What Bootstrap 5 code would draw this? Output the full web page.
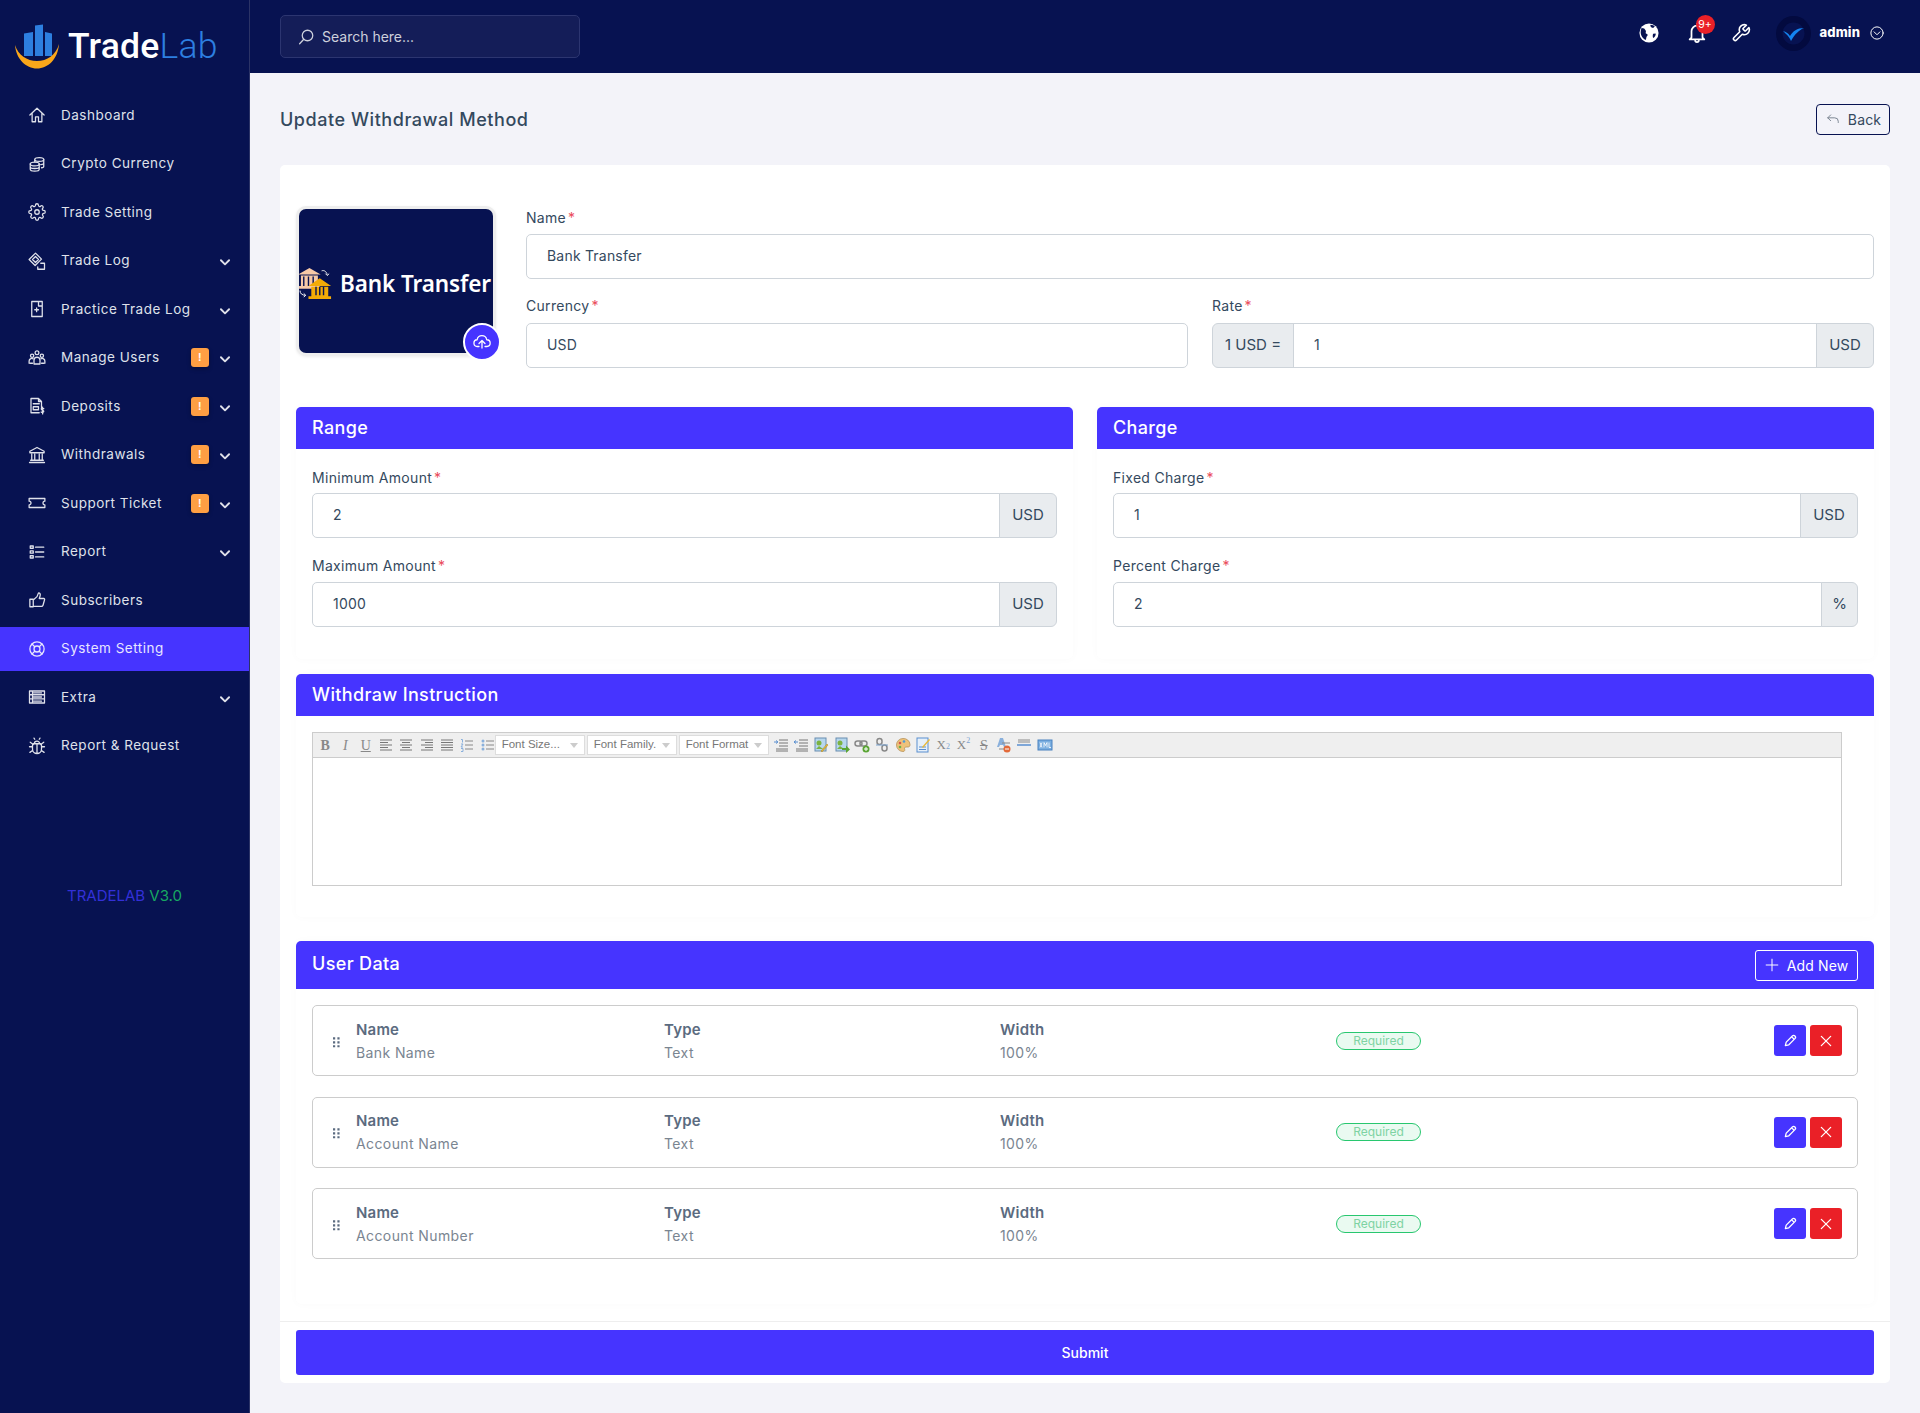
<!DOCTYPE html>
<html lang="en">
<head>
<meta charset="utf-8">
<title>Update Withdrawal Method</title>
<link href="https://cdn.jsdelivr.net/npm/bootstrap@5.3.0/dist/css/bootstrap.min.css" rel="stylesheet">
<style>
:root{--navy:#071251;--pri:#4634ff;--red:#ea2027;}
html,body{margin:0;background:#f3f3f9;}
body{font-family:Inter,"Noto Sans",sans-serif;font-size:14px;letter-spacing:.15px;color:#34495e;min-height:1413px;}
.ico{width:18px;height:18px;fill:none;stroke:currentColor;stroke-width:1.7;stroke-linecap:round;stroke-linejoin:round;flex:none;}
.shell{min-height:1413px;}
.side{width:250px;flex:none;background:var(--navy);border-right:1px solid #2b3366;color:#dfe1ea;}
.brand{height:93px;padding-left:14px;}
.brand-txt{font-family:Roboto,sans-serif;font-size:35.5px;line-height:1;font-weight:500;color:#fff;letter-spacing:.2px;margin-left:6px;}
.brand-txt span{font-weight:300;color:#2d7fe0;}
.side-item{height:44px;margin-bottom:4.5px;padding-left:28px;padding-right:18px;color:#dfe1ea;text-decoration:none;font-size:13.5px;letter-spacing:.5px;}
.side-item.on{background:var(--pri);color:#e8e6ff;}
.side-item .lbl{margin-left:15px;flex:1;}
.warn-pill{width:18px;height:19px;background:#ff9f43;color:#fff;border-radius:3px;font-size:11px;font-weight:600;box-shadow:0 2px 4px rgba(0,0,0,.25);margin-right:9px;}
.chev{width:14px;height:14px;fill:none;stroke:currentColor;stroke-width:3.2;stroke-linecap:round;stroke-linejoin:round;margin-right:-1px;margin-top:3px;}
.ver{margin-top:113px;font-size:15px;letter-spacing:0;font-weight:400;}
.ver .v1{color:#3330d8;}.ver .v2{color:#17a862;}
.topbar{height:73px;background:var(--navy);padding:0 30px;color:#fff;}
.srch{width:300px;height:43px;background:#141d58;border:1px solid #2c3570;border-radius:5px;padding-left:16px;color:#cdd0dc;}
.srch .ph{margin-left:7px;font-size:14px;letter-spacing:0;}
.top-right{margin-bottom:7px;}
.wrap{padding:0 30px 30px;}
.head-row{height:92px;padding-top:2px;}
.ptitle{font-size:18px;font-weight:500;letter-spacing:.55px;color:#34495e;margin:0;}
.back-btn{height:31px;width:74px;border:1px solid var(--navy);border-radius:4px;color:#34495e;font-size:14px;gap:8px;padding-left:1px;margin-bottom:2px;}
.main-panel{background:#fff;border-radius:5px;height:1218px;padding:41px 16px 0;}
.img-wrap{width:200px;height:150px;border-radius:10px;padding:3px;background:#eee;box-shadow:0 1px 3px rgba(0,0,0,.08);margin-right:30px;flex:none;}
.img-in{height:100%;overflow:hidden;border-radius:7px;background:var(--navy);color:#fff;padding-top:6px;}
.img-in b{font-family:"Noto Sans",sans-serif;font-weight:600;font-size:22.5px;letter-spacing:-.1px;margin-left:7px;white-space:nowrap;}
.up-btn{position:absolute;right:-5px;bottom:-5px;width:38px;height:38px;border-radius:50%;background:var(--pri);border:2px solid #fff;color:#fff;}
.form-col{padding-top:1px;}
.fl{font-size:14px;font-weight:400;color:#34495e;letter-spacing:.3px;margin:0;line-height:21px;margin-bottom:6px;display:block;}
.fl i{color:#ea4a5a;font-style:normal;margin-left:2px;}
.fl.a1{padding-top:2px;margin-bottom:5px;}
.fl.a2{padding-top:1px;margin-bottom:6px;}
.fl.a3{margin-bottom:7px;}
.inp.form-control{height:45px;border:1px solid #ced4da;border-radius:5px;padding:0 20px 2px;font-size:14px;color:#34495e;letter-spacing:.2px;}
.addon.input-group-text{background:#e9ecef;border-color:#ced4da;color:#34495e;font-size:15px;padding:0 12px;letter-spacing:0;justify-content:center;}
.w58{width:58px;}.w37{width:37px;}
.mt-range{margin-top:39px;}
.blk{background:#fff;border-radius:5px;box-shadow:0 0 10px rgba(0,0,0,.025);}
.blk-h{background:var(--pri);color:#fff;height:42px;padding:0 16px 2px;border-radius:5px 5px 0 0;font-size:18px;font-weight:500;letter-spacing:.35px;}
.blk-h.tall{height:48px;padding-bottom:3px;}
.blk-b{padding:16px;}
.blk-b.ed{padding-right:32px;padding-bottom:31px;}
.blk-b.ud{padding-bottom:24px;}
.gap-a{margin-bottom:15px;}
.gap-b{margin-bottom:24px;}
.editor{height:154px;border:1px solid #ccc;}
.ed-bar{height:25px;background:#efefef;border-bottom:1px solid #ccc;padding-left:2px;color:#666;}
.ed-cell{width:20.3px;height:24px;flex:none;font-family:"Liberation Serif",serif;font-size:14px;color:#888;letter-spacing:0;}
.ed-cell svg{width:16px;height:16px;}
.ed-cell.nar{font-size:13px;}
.ed-sel{width:90px;height:20px;background:#fff;border:1px solid #ddd;margin-right:2px;font-family:"Liberation Sans",sans-serif;font-size:11.5px;color:#777;padding:0 6px;letter-spacing:0;flex:none;white-space:nowrap;}
.ed-sel.first{margin-left:-3px;}
.ed-sel::after{content:"";margin-left:auto;border:4px solid transparent;border-top:5px solid #ccc;border-bottom:0;}
.ed-cell sub,.ed-cell sup{color:#7ba3d0;font-size:8px;}
.add-btn{height:31px;width:103px;border:1px solid #fff;border-radius:3px;color:#fff;font-size:14px;font-weight:400;letter-spacing:.15px;gap:8px;margin-top:3px;}
.frow{height:71px;border:1px solid #ccc;border-radius:5px;margin-bottom:20.5px;padding-right:15px;}
.drag{width:43px;padding-left:20px;flex:none;color:#5b6b80;}
.c1{width:308px;flex:none;}.c2{width:336px;flex:none;}
.fk{font-weight:600;font-size:15px;color:#5b6b80;line-height:23px;letter-spacing:.2px;}
.fv{color:#7a8591;line-height:23px;letter-spacing:.4px;}
.req{width:85px;height:18px;border:1px solid #28c76f;background:#eafaf1;color:#7ed3a3;border-radius:999px;font-size:12px;letter-spacing:0;}
.act{width:32px;height:31px;border-radius:3px;color:#fff;}
.act.e{background:var(--pri);}.act.d{background:var(--red);}
.act .ico{width:14px;height:14px;stroke-width:2.2;}
.rule{border-top:1px solid #eee;margin:17px -16px 8px;}
.sub-btn.btn{background:var(--pri);color:#fff;height:45px;width:100%;border:0;border-radius:3px;font-size:14px;font-weight:500;}
.i-bell{width:22px;height:24px;stroke-width:1.9;}
.bell-box{margin-left:27px;}
.bell-num{left:10px;top:-6px;width:19px;height:19px;background:#ea2027;border-radius:50%;font-size:10.5px;letter-spacing:0;color:#fff;}
.i-wrench{width:20px;height:20px;margin-left:23px;stroke-width:1.9;}
.ava{margin-left:25px;}
.adm{margin-left:9px;font-size:13px;font-weight:800;letter-spacing:.1px;}
.i-down{width:14px;height:14px;margin-left:10px;margin-right:6px;}
.i-back{width:14px;height:14px;color:#7a8591;}
.i-plus{width:14px;height:14px;}
</style>
</head>
<body>
<div class="d-flex shell">
  <aside class="side d-flex flex-column">
    <div class="brand d-flex align-items-center">
      <svg width="48" height="46" viewBox="0 0 48 46" aria-hidden="true"><path d="M10 9.500l9-1.500v24h-9zM21 1.500l8-1v31.500h-8zM31 8l7 1.500V32h-7z" fill="#2d7fe0"/><path d="M1 21C2 35 12 44.500 23 44.500S44 35 45 20C42 31 33 37 23 37S4 31 1 21z" fill="#f9a61a"/></svg>
      <div class="brand-txt">Trade<span>Lab</span></div>
    </div>
    <a class="side-item d-flex align-items-center" href="#"><svg class="ico" viewBox="0 0 24 24"><path d="M2.500 12 12 3l9.500 9M5.500 9.500V21h4.500v-6.500h4V21h4.500V9.500"/></svg><span class="lbl">Dashboard</span></a>
    <a class="side-item d-flex align-items-center" href="#"><svg class="ico" viewBox="0 0 24 24"><ellipse cx="15" cy="6" rx="6" ry="2.500"/><path d="M21 6v9c0 1-1 2-3 2M9 6.500V9M21 10.500c0 1-1.500 2-4 2.300"/><ellipse cx="9" cy="12" rx="6" ry="2.500"/><path d="M3 12v7c0 1.500 2.700 2.500 6 2.500s6-1 6-2.500v-7M3 15.500c0 1.500 2.700 2.500 6 2.500s6-1 6-2.500"/></svg><span class="lbl">Crypto Currency</span></a>
    <a class="side-item d-flex align-items-center" href="#"><svg class="ico" viewBox="0 0 24 24"><circle cx="12" cy="12" r="3"/><path d="M19.400 15a1.650 1.650 0 0 0 .33 1.820l.06.06a2 2 0 0 1-2.830 2.830l-.06-.06a1.650 1.650 0 0 0-2.820 1.180V21a2 2 0 0 1-4 0v-.09A1.650 1.650 0 0 0 7.180 19.730l-.06.06a2 2 0 0 1-2.830-2.830l.06-.06a1.650 1.650 0 0 0-1.180-2.820H3a2 2 0 0 1 0-4h.09A1.650 1.650 0 0 0 4.270 7.180l-.06-.06a2 2 0 0 1 2.830-2.830l.06.06a1.650 1.650 0 0 0 2.820-1.180V3a2 2 0 0 1 4 0v.09a1.650 1.650 0 0 0 2.820 1.180l.06-.06a2 2 0 0 1 2.830 2.830l-.06.06a1.650 1.650 0 0 0 1.180 2.820H21a2 2 0 0 1 0 4h-.09a1.650 1.650 0 0 0-1.510 1z"/></svg><span class="lbl">Trade Setting</span></a>
    <a class="side-item d-flex align-items-center" href="#"><svg class="ico" viewBox="0 0 24 24"><path d="M10 1.500 1.500 10l8 8 8.500-8.500z"/><path d="M6 10 10 6l4 4-4 4zM17 15h5v8h-9v-3"/></svg><span class="lbl">Trade Log</span><svg class="chev" viewBox="0 0 24 24"><path d="M5 9l7 7 7-7"/></svg></a>
    <a class="side-item d-flex align-items-center" href="#"><svg class="ico" viewBox="0 0 24 24"><path d="M5 2h14v20H5zM14 2v6h5M9 13h5M11.500 10.500v5"/></svg><span class="lbl">Practice Trade Log</span><svg class="chev" viewBox="0 0 24 24"><path d="M5 9l7 7 7-7"/></svg></a>
    <a class="side-item d-flex align-items-center" href="#"><svg class="ico" viewBox="0 0 24 24"><circle cx="12" cy="5" r="2.500"/><circle cx="5.500" cy="9" r="2.200"/><circle cx="18.500" cy="9" r="2.200"/><path d="M8 20v-5a4 4 0 0 1 8 0v5zM1.500 19v-3a3.500 3.500 0 0 1 5-3M22.500 19v-3a3.500 3.500 0 0 0-5-3M3 19h3M18 19h3"/></svg><span class="lbl">Manage Users</span><span class="warn-pill d-flex align-items-center justify-content-center">!</span><svg class="chev" viewBox="0 0 24 24"><path d="M5 9l7 7 7-7"/></svg></a>
    <a class="side-item d-flex align-items-center" href="#"><svg class="ico" viewBox="0 0 24 24"><path d="M15 21H4V2h10l4 4v8M14 2v4h4M7 9h8M7 13h7v4H7zM21 15.500c-2-1.500-4-.5-3 1s3 1 3 2.500-2 2-3.500 1M19.500 13.500v9"/></svg><span class="lbl">Deposits</span><span class="warn-pill d-flex align-items-center justify-content-center">!</span><svg class="chev" viewBox="0 0 24 24"><path d="M5 9l7 7 7-7"/></svg></a>
    <a class="side-item d-flex align-items-center" href="#"><svg class="ico" viewBox="0 0 24 24"><path d="M12 2 2.500 7v2h19V7zM5 11v7M9 11v7M15 11v7M19 11v7M3.500 19h17M2 22h20"/></svg><span class="lbl">Withdrawals</span><span class="warn-pill d-flex align-items-center justify-content-center">!</span><svg class="chev" viewBox="0 0 24 24"><path d="M5 9l7 7 7-7"/></svg></a>
    <a class="side-item d-flex align-items-center" href="#"><svg class="ico" viewBox="0 0 24 24"><path d="M1.500 6h21v3.500a2.500 2.500 0 0 0 0 5V18h-21v-3.500a2.500 2.500 0 0 0 0-5z"/></svg><span class="lbl">Support Ticket</span><span class="warn-pill d-flex align-items-center justify-content-center">!</span><svg class="chev" viewBox="0 0 24 24"><path d="M5 9l7 7 7-7"/></svg></a>
    <a class="side-item d-flex align-items-center" href="#"><svg class="ico" viewBox="0 0 24 24"><path d="M3 4h4v3H3zM3 10.500h4v3H3zM3 17h4v3H3zM10 5.500h11M10 12h11M10 18.500h11"/></svg><span class="lbl">Report</span><svg class="chev" viewBox="0 0 24 24"><path d="M5 9l7 7 7-7"/></svg></a>
    <a class="side-item d-flex align-items-center" href="#"><svg class="ico" viewBox="0 0 24 24"><path d="M7 11v10H2.500V11zM7 12l5-4.500 2-5c2 0 3 2 2 4.500l-1 3h6c1 0 1.500 1 1 2l-2 7c-.3 1-1 1.500-2 1.500H7"/></svg><span class="lbl">Subscribers</span></a>
    <a class="side-item on d-flex align-items-center" href="#"><svg class="ico" viewBox="0 0 24 24"><circle cx="12" cy="12" r="9.500"/><circle cx="12" cy="12" r="4"/><path d="M5.300 5.300 9 9M18.700 5.300 15 9M5.300 18.700 9 15M18.700 18.700 15 15"/></svg><span class="lbl">System Setting</span></a>
    <a class="side-item d-flex align-items-center" href="#"><svg class="ico" viewBox="0 0 24 24"><path d="M2 4h20v16H2zM2 9h20M2 14.500h20M6 4v16M6 6.500h12M6 12h12M6 17.500h12"/></svg><span class="lbl">Extra</span><svg class="chev" viewBox="0 0 24 24"><path d="M5 9l7 7 7-7"/></svg></a>
    <a class="side-item d-flex align-items-center" href="#"><svg class="ico" viewBox="0 0 24 24"><path d="M7 9h10a2 2 0 0 1 1 2v5a6 6 0 0 1-12 0v-5a2 2 0 0 1 1-2zM8.500 9a3.500 3.500 0 0 1 7 0M12 9v13M6 13H2M22 13h-4M6 18l-3.500 2.500M18 18l3.500 2.500M7 10 3 7M17 10l4-3M9 3 8 1.500M15 3l1-1.500"/></svg><span class="lbl">Report &amp; Request</span></a>
    <div class="ver text-center"><span class="v1">TRADELAB</span> <span class="v2">V3.0</span></div>
  </aside>
  <div class="flex-grow-1 min-w-0">
    <header class="topbar d-flex align-items-center justify-content-between">
      <div class="srch d-flex align-items-center">
        <svg class="ico" viewBox="0 0 24 24"><circle cx="14" cy="10" r="7"/><path d="M9 15 3.500 21"/></svg>
        <span class="ph">Search here...</span>
      </div>
      <div class="top-right d-flex align-items-center">
        <svg width="20" height="20" viewBox="0 0 24 24"><circle cx="12" cy="12" r="11.500" fill="#fff"/><path d="M3 6c3 0 4 1 5 3s-1 3 1 4 1.500 2 .5 3-.5 3-1.500 4.500C5 19 2 15 2 11c0-2 .5-3.500 1-5zM14 2c2 0 4 1 5 2l-2 2-2-.5-1.500-2zM17 13l3-.5c.5 2-1 4.500-3 5.500-.7-1.500-.7-3.500 0-5z" fill="#071251"/></svg>
        <div class="bell-box position-relative d-flex">
          <svg class="ico i-bell" viewBox="0 0 24 24"><path d="M6 17V10a6 6 0 0 1 6-6 6 6 0 0 1 6 6v7l2 2H4zM10 20a2 2 0 0 0 4 0M12 4V2"/></svg>
          <span class="bell-num position-absolute d-flex align-items-center justify-content-center">9+</span>
        </div>
        <svg class="ico i-wrench" viewBox="0 0 24 24"><path d="M14.700 6.300a1 1 0 0 0 0 1.400l1.600 1.600a1 1 0 0 0 1.400 0l3.770-3.770a6 6 0 0 1-7.940 7.940l-6.910 6.910a2.120 2.120 0 0 1-3-3l6.910-6.910a6 6 0 0 1 7.940-7.940z"/></svg>
        <svg class="ava" width="35" height="35" viewBox="0 0 35 35"><circle cx="17.500" cy="17.500" r="17.500" fill="#030a3f"/><circle cx="17.500" cy="17.500" r="11" fill="#071251"/><path d="M7 15c3 1 5 2 7 5 3-5 7-8 14-8-5 2-9 6-13 13C13 20 10 18 7 15z" fill="#1484f0"/></svg>
        <span class="adm">admin</span>
        <svg class="ico i-down" viewBox="0 0 24 24"><circle cx="12" cy="12" r="10.500"/><path d="M7 10l5 5 5-5"/></svg>
      </div>
    </header>
    <main class="wrap">
      <div class="head-row d-flex align-items-center justify-content-between">
        <h1 class="ptitle">Update Withdrawal Method</h1>
        <a class="back-btn d-flex align-items-center justify-content-center text-decoration-none" href="#"><svg class="ico i-back" viewBox="0 0 24 24"><path d="M8 5 3 10l5 5M3 10h12a6 6 0 0 1 6 6v2"/></svg>Back</a>
      </div>
      <section class="main-panel">
        <div class="d-flex">
          <div class="img-wrap position-relative">
            <div class="img-in d-flex align-items-center">
              <svg width="34" height="32" viewBox="0 0 36 34" class="flex-shrink-0"><path d="M-1 7 11 0l12 7zM2 8h18v11H2zM0 19h22v3H0z" fill="#f7c9a7"/><path d="M5 9v10M10 9v10M15 9v10" stroke="#071251" stroke-width="1.500"/><path d="M10 19 22 11l12 8zM13 20h18v10H13zM10 30h24v3H10z" fill="#f4ab06"/><path d="M18 20v9M22 20v9M26 20v9" stroke="#071251" stroke-width="1.500"/><path d="M24 3c3-1 5 1 6 4M28 6l2 2 2-2M1 24c0 3 2 5 6 5M5 27l2 2-2 2" fill="none" stroke="#fff" stroke-width="1"/></svg>
              <b>Bank Transfer</b>
            </div>
            <div class="up-btn d-flex align-items-center justify-content-center">
              <svg class="ico" viewBox="0 0 24 24"><path d="M8 18H6a4.500 4.500 0 0 1-.5-9 6.500 6.500 0 0 1 12.800 0 4.500 4.500 0 0 1 .2 9H16M8 14l4-4 4 4M12 10v10"/></svg>
            </div>
          </div>
          <div class="form-col flex-grow-1 min-w-0">
            <label class="fl">Name<i>*</i></label>
            <input class="form-control inp mb-3" value="Bank Transfer">
            <div class="row gx-4">
              <div class="col-6"><label class="fl a3">Currency<i>*</i></label><input class="form-control inp" value="USD"></div>
              <div class="col-6"><label class="fl a3">Rate<i>*</i></label>
                <div class="input-group"><span class="input-group-text addon">1 USD =</span><input class="form-control inp" value="1"><span class="input-group-text addon w58">USD</span></div>
              </div>
            </div>
          </div>
        </div>
        <div class="row gx-4 mt-range">
          <div class="col-6"><div class="blk gap-a">
            <div class="blk-h d-flex align-items-center">Range</div>
            <div class="blk-b">
              <label class="fl a1">Minimum Amount<i>*</i></label>
              <div class="input-group mb-3"><input class="form-control inp" value="2"><span class="input-group-text addon w58">USD</span></div>
              <label class="fl a2">Maximum Amount<i>*</i></label>
              <div class="input-group mb-3"><input class="form-control inp" value="1000"><span class="input-group-text addon w58">USD</span></div>
            </div>
          </div></div>
          <div class="col-6"><div class="blk gap-a">
            <div class="blk-h d-flex align-items-center">Charge</div>
            <div class="blk-b">
              <label class="fl a1">Fixed Charge<i>*</i></label>
              <div class="input-group mb-3"><input class="form-control inp" value="1"><span class="input-group-text addon w58">USD</span></div>
              <label class="fl a2">Percent Charge<i>*</i></label>
              <div class="input-group mb-3"><input class="form-control inp" value="2"><span class="input-group-text addon w37">%</span></div>
            </div>
          </div></div>
        </div>
        <div class="blk gap-b">
          <div class="blk-h d-flex align-items-center">Withdraw Instruction</div>
          <div class="blk-b ed">
            <div class="editor">
              <div class="ed-bar d-flex align-items-center">
                <span class="ed-cell d-flex align-items-center justify-content-center"><b>B</b></span>
                <span class="ed-cell d-flex align-items-center justify-content-center"><i>I</i></span>
                <span class="ed-cell d-flex align-items-center justify-content-center"><u>U</u></span>
                <span class="ed-cell d-flex align-items-center justify-content-center"><svg viewBox="0 0 16 16" stroke="#777"><path d="M2 3h12M2 5.500h8M2 8h12M2 10.500h8M2 13h12"/></svg></span>
                <span class="ed-cell d-flex align-items-center justify-content-center"><svg viewBox="0 0 16 16" stroke="#777"><path d="M2 3h12M4 5.500h8M2 8h12M4 10.500h8M2 13h12"/></svg></span>
                <span class="ed-cell d-flex align-items-center justify-content-center"><svg viewBox="0 0 16 16" stroke="#777"><path d="M2 3h12M6 5.500h8M2 8h12M6 10.500h8M2 13h12"/></svg></span>
                <span class="ed-cell d-flex align-items-center justify-content-center"><svg viewBox="0 0 16 16" stroke="#777"><path d="M2 3h12M2 5.500h12M2 8h12M2 10.500h12M2 13h12"/></svg></span>
                <span class="ed-cell d-flex align-items-center justify-content-center"><svg viewBox="0 0 16 16"><path d="M6 4h8M6 8h8M6 12h8" stroke="#888"/><path d="M2 2.500h1.500v3M2 7h2l-2 3h2M2 11.500h2v3H2" stroke="#8ab0dc" fill="none"/></svg></span>
                <span class="ed-cell d-flex align-items-center justify-content-center"><svg viewBox="0 0 16 16"><path d="M6 4h8M6 8h8M6 12h8" stroke="#888"/><circle cx="3" cy="4" r="1.500" fill="#8ab0dc"/><circle cx="3" cy="8" r="1.500" fill="#8ab0dc"/><circle cx="3" cy="12" r="1.500" fill="#8ab0dc"/></svg></span>
                <span class="ed-sel first d-flex align-items-center">Font Size...</span>
                <span class="ed-sel d-flex align-items-center">Font Family.</span>
                <span class="ed-sel d-flex align-items-center">Font Format</span>
                <span class="ed-cell d-flex align-items-center justify-content-center"><svg viewBox="0 0 16 16"><path d="M6 3h9M6 6h9M6 9h9M3 12h12M3 14h12" stroke="#777"/><path d="M1 5h3M3 3.500 5 5 3 6.500" stroke="#5a8fd0" fill="none"/></svg></span>
                <span class="ed-cell d-flex align-items-center justify-content-center"><svg viewBox="0 0 16 16"><path d="M6 3h9M6 6h9M6 9h9M3 12h12M3 14h12" stroke="#777"/><path d="M1 5h4M3 3.500 1 5 3 6.500" stroke="#5a8fd0" fill="none"/></svg></span>
                <span class="ed-cell d-flex align-items-center justify-content-center"><svg viewBox="0 0 16 16"><rect x="2" y="1" width="11" height="13" fill="#b7d7ee" stroke="#6a8eb0"/><circle cx="6" cy="6" r="2.500" fill="#7cb342"/><path d="M3 12l3-3 4 3z" fill="#7cb342"/><path d="M9 15l6-7-1-1-6 7z" fill="#e8b93a" stroke="#a98420" stroke-width=".5"/></svg></span>
                <span class="ed-cell d-flex align-items-center justify-content-center"><svg viewBox="0 0 16 16"><rect x="2" y="1" width="11" height="13" fill="#b7d7ee" stroke="#6a8eb0"/><circle cx="6" cy="6" r="2.500" fill="#7cb342"/><path d="M3 12l3-3 4 3z" fill="#7cb342"/><path d="M8 11h4V8.500l4 4-4 3.500v-3H8z" fill="#5aa534"/></svg></span>
                <span class="ed-cell d-flex align-items-center justify-content-center"><svg viewBox="0 0 16 16"><rect x="1" y="4" width="7" height="5" rx="2.500" fill="none" stroke="#888" stroke-width="1.500"/><rect x="6" y="4" width="7" height="5" rx="2.500" fill="none" stroke="#888" stroke-width="1.500"/><circle cx="12" cy="12" r="3.500" fill="#5aa534"/><path d="M10 12h4M12 10v4" stroke="#fff"/></svg></span>
                <span class="ed-cell d-flex align-items-center justify-content-center"><svg viewBox="0 0 16 16"><rect x="3" y="1.500" width="5" height="6" rx="2.500" fill="none" stroke="#888" stroke-width="1.500"/><rect x="8" y="8" width="5" height="6" rx="2.500" fill="none" stroke="#888" stroke-width="1.500"/><path d="M2 8h12" stroke="#7ba3d0"/></svg></span>
                <span class="ed-cell d-flex align-items-center justify-content-center"><svg viewBox="0 0 16 16"><path d="M8 1.500a6.500 6.500 0 1 0 0 13c2 0 2-1.500 1.500-3s2-1.500 3.500-1.500 2-1 2-2.500A6.500 6.500 0 0 0 8 1.500z" fill="#eec27a" stroke="#b0884a" stroke-width=".7"/><circle cx="5" cy="6" r="1.300" fill="#d9534f"/><circle cx="9" cy="4.500" r="1.300" fill="#4e9ad4"/><circle cx="5" cy="10" r="1.300" fill="#6bb34a"/></svg></span>
                <span class="ed-cell d-flex align-items-center justify-content-center"><svg viewBox="0 0 16 16"><rect x="2" y="1" width="11" height="14" fill="#e6f0fa" stroke="#5a8fd0"/><path d="M4 10h7M4 12.500h7" stroke="#5a8fd0"/><path d="M7 10l7-8 1 1-7 8z" fill="#e8b93a"/></svg></span>
                <span class="ed-cell nar d-flex align-items-center justify-content-center">X<sub>2</sub></span>
                <span class="ed-cell nar d-flex align-items-center justify-content-center">X<sup>2</sup></span>
                <span class="ed-cell d-flex align-items-center justify-content-center"><s>S</s></span>
                <span class="ed-cell d-flex align-items-center justify-content-center"><svg viewBox="0 0 16 16"><path d="M4 1 1 10h2l1-2h3l1 2h2L7 1z" fill="#8ab0dc"/><path d="M3 12h9M6 6h8" stroke="#888"/><circle cx="11" cy="12" r="3.500" fill="#e36a3a"/><path d="M9 12h4" stroke="#fff"/></svg></span>
                <span class="ed-cell d-flex align-items-center justify-content-center"><svg viewBox="0 0 16 16"><path d="M2 3h12M2 5h12" stroke="#8a8a8a"/><path d="M1 8h14" stroke="#5a8fd0" stroke-width="1.500"/></svg></span>
                <span class="ed-cell d-flex align-items-center justify-content-center"><svg viewBox="0 0 16 16"><rect x="1" y="3" width="14" height="10" fill="#7aaee0" stroke="#4a82c0"/><path d="M3 5.500l2 5M5 5.500l-2 5M7 10.500v-5l1.500 3 1.500-3v5M12 5.500v5h2" stroke="#fff" fill="none" stroke-width=".8"/></svg></span>
              </div>
            </div>
          </div>
        </div>
        <div class="blk">
          <div class="blk-h tall d-flex align-items-center justify-content-between">
            <span>User Data</span>
            <a class="add-btn d-flex align-items-center justify-content-center text-decoration-none" href="#"><svg class="ico i-plus" viewBox="0 0 24 24"><path d="M12 2v20M2 12h20"/></svg>Add New</a>
          </div>
          <div class="blk-b ud">
            <div class="frow d-flex align-items-center">
              <div class="drag"><svg width="7" height="11" viewBox="0 0 8 12" fill="currentColor"><path d="M0 0h2.500v2.500H0zM5 0h2.500v2.500H5zM0 4.500h2.500V7H0zM5 4.500h2.500V7H5zM0 9h2.500v2.500H0zM5 9h2.500v2.500H5z"/></svg></div>
              <div class="c1"><div class="fk">Name</div><div class="fv">Bank Name</div></div>
              <div class="c2"><div class="fk">Type</div><div class="fv">Text</div></div>
              <div class="c2"><div class="fk">Width</div><div class="fv">100%</div></div>
              <span class="req d-flex align-items-center justify-content-center">Required</span>
              <div class="ms-auto d-flex gap-1">
                <span class="act e d-flex align-items-center justify-content-center"><svg class="ico" viewBox="0 0 24 24"><path d="M4 20l1.500-6L16 3.500a3 3 0 0 1 4.500 4.500L10 18.500zM15 5l4 4"/></svg></span>
                <span class="act d d-flex align-items-center justify-content-center"><svg class="ico" viewBox="0 0 24 24"><path d="M4 4l16 16M20 4 4 20"/></svg></span>
              </div>
            </div>
            <div class="frow d-flex align-items-center">
              <div class="drag"><svg width="7" height="11" viewBox="0 0 8 12" fill="currentColor"><path d="M0 0h2.500v2.500H0zM5 0h2.500v2.500H5zM0 4.500h2.500V7H0zM5 4.500h2.500V7H5zM0 9h2.500v2.500H0zM5 9h2.500v2.500H5z"/></svg></div>
              <div class="c1"><div class="fk">Name</div><div class="fv">Account Name</div></div>
              <div class="c2"><div class="fk">Type</div><div class="fv">Text</div></div>
              <div class="c2"><div class="fk">Width</div><div class="fv">100%</div></div>
              <span class="req d-flex align-items-center justify-content-center">Required</span>
              <div class="ms-auto d-flex gap-1">
                <span class="act e d-flex align-items-center justify-content-center"><svg class="ico" viewBox="0 0 24 24"><path d="M4 20l1.500-6L16 3.500a3 3 0 0 1 4.500 4.500L10 18.500zM15 5l4 4"/></svg></span>
                <span class="act d d-flex align-items-center justify-content-center"><svg class="ico" viewBox="0 0 24 24"><path d="M4 4l16 16M20 4 4 20"/></svg></span>
              </div>
            </div>
            <div class="frow d-flex align-items-center">
              <div class="drag"><svg width="7" height="11" viewBox="0 0 8 12" fill="currentColor"><path d="M0 0h2.500v2.500H0zM5 0h2.500v2.500H5zM0 4.500h2.500V7H0zM5 4.500h2.500V7H5zM0 9h2.500v2.500H0zM5 9h2.500v2.500H5z"/></svg></div>
              <div class="c1"><div class="fk">Name</div><div class="fv">Account Number</div></div>
              <div class="c2"><div class="fk">Type</div><div class="fv">Text</div></div>
              <div class="c2"><div class="fk">Width</div><div class="fv">100%</div></div>
              <span class="req d-flex align-items-center justify-content-center">Required</span>
              <div class="ms-auto d-flex gap-1">
                <span class="act e d-flex align-items-center justify-content-center"><svg class="ico" viewBox="0 0 24 24"><path d="M4 20l1.500-6L16 3.500a3 3 0 0 1 4.500 4.500L10 18.500zM15 5l4 4"/></svg></span>
                <span class="act d d-flex align-items-center justify-content-center"><svg class="ico" viewBox="0 0 24 24"><path d="M4 4l16 16M20 4 4 20"/></svg></span>
              </div>
            </div>
          </div>
        </div>
        <div class="rule"></div>
        <button class="btn sub-btn" type="button">Submit</button>
      </section>
    </main>
  </div>
</div>
<script src="https://cdn.jsdelivr.net/npm/bootstrap@5.3.0/dist/js/bootstrap.bundle.min.js"></script>
</body>
</html>
